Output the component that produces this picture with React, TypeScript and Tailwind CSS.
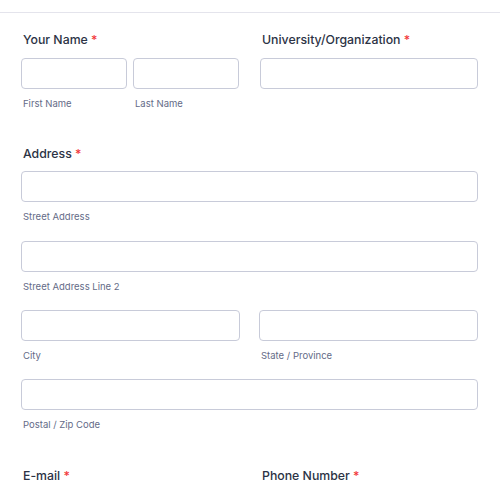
import React from 'react';

const Label = ({ text }: { text: string }) => (
  <div className="h-5 pl-[2px] text-[12.3px] leading-[22px] font-medium text-[#2c3345]">
    {text} <span className="text-[#f23a3c]">*</span>
  </div>
);

const Input = ({ className = '' }: { className?: string }) => (
  <input
    type="text"
    className={`block h-[31px] w-full rounded-[4px] border border-[#c8cbd9] bg-white ${className}`}
  />
);

const Sub = ({ text }: { text: string }) => (
  <div className="mt-[8px] h-[14px] pl-[2px] text-[9.5px] leading-[14px] text-[#646b87]">{text}</div>
);

const Field = ({ sub }: { sub: string }) => (
  <div className="flex-1">
    <Input />
    <Sub text={sub} />
  </div>
);

export default function App() {
  return (
    <div className="h-[484px] w-[500px] overflow-hidden bg-white pt-3 font-['Inter',sans-serif]">
      <div className="border-t border-[#e4e4ec] pt-4 pr-[22px] pl-[21px]">
        <div className="flex gap-[21px]">
          <div className="flex-1">
            <Label text="Your Name" />
            <div className="mt-[9px] flex gap-[6px]">
              <Field sub="First Name" />
              <Field sub="Last Name" />
            </div>
          </div>
          <div className="flex-1">
            <Label text="University/Organization" />
            <div className="mt-[9px]">
              <Input />
            </div>
          </div>
        </div>

        <div className="mt-[32px]">
          <Label text="Address" />
          <div className="mt-2">
            <Field sub="Street Address" />
          </div>
          <div className="mt-[17px]">
            <Field sub="Street Address Line 2" />
          </div>
          <div className="mt-[16px] flex gap-[19px]">
            <Field sub="City" />
            <Field sub="State / Province" />
          </div>
          <div className="mt-[16px]">
            <Field sub="Postal / Zip Code" />
          </div>
        </div>

        <div className="mt-[33px] flex gap-[21px]">
          <div className="flex-1">
            <Label text="E-mail" />
          </div>
          <div className="flex-1">
            <Label text="Phone Number" />
          </div>
        </div>
      </div>
    </div>
  );
}
